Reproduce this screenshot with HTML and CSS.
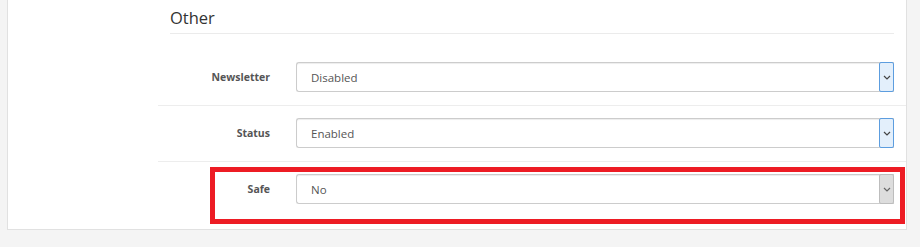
FILE: index.html
```html
<!DOCTYPE html>
<html lang="en">
<head>
    <meta charset="UTF-8">
    <title>Customer - Other</title>
    <link rel="stylesheet" href="styles.css">
</head>
<body>

<div class="panel">
    <div class="form-area">
        <h3 class="section-title">Other</h3>

        <div class="form-row">
            <label class="form-label">Newsletter</label>
            <div class="select active">
                <span class="select-value">Disabled</span>
                <span class="select-arrow">
                    <svg width="8" height="5" viewBox="0 0 8 5"><path d="M1 1 L4 4 L7 1" fill="none" stroke="#444" stroke-width="1.2"/></svg>
                </span>
            </div>
        </div>

        <div class="form-row">
            <label class="form-label">Status</label>
            <div class="select active">
                <span class="select-value">Enabled</span>
                <span class="select-arrow">
                    <svg width="8" height="5" viewBox="0 0 8 5"><path d="M1 1 L4 4 L7 1" fill="none" stroke="#444" stroke-width="1.2"/></svg>
                </span>
            </div>
        </div>

        <div class="form-row last">
            <label class="form-label">Safe</label>
            <div class="select">
                <span class="select-value">No</span>
                <span class="select-arrow">
                    <svg width="8" height="5" viewBox="0 0 8 5"><path d="M1 1 L4 4 L7 1" fill="none" stroke="#666" stroke-width="1.2"/></svg>
                </span>
            </div>
            <div class="highlight"></div>
        </div>
    </div>
</div>

</body>
</html>
```

FILE: styles.css
```css
body {
    font-family: "Open Sans", "Liberation Sans", sans-serif;
    background-color: #f4f4f4;
    margin: 0;
    color: #555;
}
.panel {
    background: white;
    width: 900px;
    margin-left: 7px;
    border: 1px solid #e1e1e1;
    border-top: none;
    box-sizing: border-box;
    padding-bottom: 12px;
}
.form-area {
    margin-left: 150px;
}
.section-title {
    font-size: 16.5px;
    font-weight: normal;
    line-height: 20px;
    color: #333;
    margin: 0 12px 16px 12px;
    padding: 8px 0 5px 0;
    border-bottom: 1px solid #ebebeb;
}
.form-row {
    position: relative;
    display: flex;
    align-items: center;
    padding: 12px 12px 13px 0;
    border-bottom: 1px solid #ededed;
}
.form-row.last {
    border-bottom: none;
}
.form-label {
    width: 112px;
    text-align: right;
    font-size: 10.5px;
    font-weight: bold;
    color: #555;
    margin-right: 26px;
}
.select {
    flex: 1;
    display: flex;
    height: 30px;
    box-sizing: border-box;
    border: 1px solid #cccccc;
    border-right: none;
    border-radius: 3px 0 0 3px;
    box-shadow: inset 0 1px 1px rgba(0, 0, 0, 0.075);
}
.select-value {
    flex: 1;
    display: flex;
    align-items: center;
    padding-left: 14px;
    font-size: 11.5px;
    color: #555;
}
.select-arrow {
    width: 15px;
    margin: -1px 0;
    box-sizing: border-box;
    display: flex;
    align-items: center;
    justify-content: center;
    background: #dddddd;
    border: 1px solid #bdbdbd;
    border-radius: 2px;
}
.select.active .select-arrow {
    background: #e3effb;
    border-color: #5c9ddf;
}
.highlight {
    position: absolute;
    left: 52px;
    top: 5px;
    width: 695px;
    height: 57px;
    box-sizing: border-box;
    border: 5px solid #ed1c24;
}
```
